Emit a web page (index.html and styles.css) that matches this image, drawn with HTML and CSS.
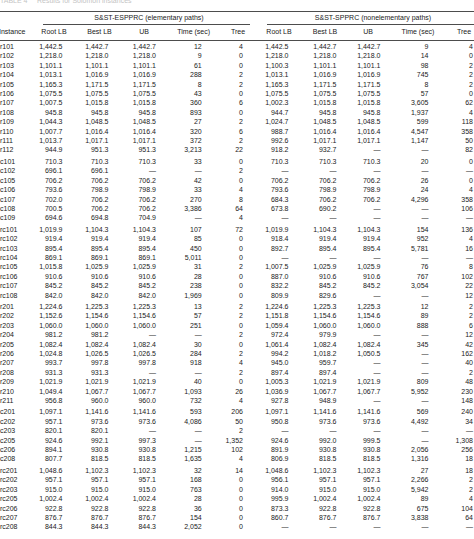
FILE: index.html
```html
<!DOCTYPE html>
<html lang="en">
<head>
<meta charset="utf-8">
<title>Table 4</title>
<link rel="stylesheet" href="styles.css">
</head>
<body>
<div class="sheet">
  <div class="caption"><span class="title"><span class="tno">TABLE 4</span>Results for Solomon instances</span></div>
  <table class="results">
    <colgroup>
      <col class="c-inst"><col class="c-rlb"><col class="c-blb"><col class="c-ub"><col class="c-time"><col class="c-tree">
      <col class="c-rlb2"><col class="c-blb2"><col class="c-ub2"><col class="c-time2"><col class="c-tree2">
    </colgroup>
    <thead>
      <tr class="grouphead">
        <th></th>
        <th colspan="5"><div class="grp grp-left">S&amp;ST-ESPPRC (elementary paths)</div></th>
        <th colspan="5"><div class="grp grp-right">S&amp;ST-SPPRC (nonelementary paths)</div></th>
      </tr>
      <tr class="colhead">
        <th class="inst">Instance</th>
        <th><span class="hc">Root LB</span></th>
        <th><span class="hc">Best LB</span></th>
        <th><span class="hc">UB</span></th>
        <th><span class="hc">Time (sec)</span></th>
        <th><span class="hc">Tree</span></th>
        <th><span class="hc">Root LB</span></th>
        <th><span class="hc">Best LB</span></th>
        <th><span class="hc">UB</span></th>
        <th><span class="hc">Time (sec)</span></th>
        <th><span class="hc">Tree</span></th>
      </tr>
    </thead>
    <tbody>
      <tr class="first"><td>r101</td><td>1,442.5</td><td>1,442.7</td><td>1,442.7</td><td>12</td><td>4</td><td>1,442.5</td><td>1,442.7</td><td>1,442.7</td><td>9</td><td>4</td></tr>
      <tr><td>r102</td><td>1,218.0</td><td>1,218.0</td><td>1,218.0</td><td>9</td><td>0</td><td>1,218.0</td><td>1,218.0</td><td>1,218.0</td><td>14</td><td>0</td></tr>
      <tr><td>r103</td><td>1,101.1</td><td>1,101.1</td><td>1,101.1</td><td>61</td><td>0</td><td>1,100.3</td><td>1,101.1</td><td>1,101.1</td><td>98</td><td>2</td></tr>
      <tr><td>r104</td><td>1,013.1</td><td>1,016.9</td><td>1,016.9</td><td>288</td><td>2</td><td>1,013.1</td><td>1,016.9</td><td>1,016.9</td><td>745</td><td>2</td></tr>
      <tr><td>r105</td><td>1,165.3</td><td>1,171.5</td><td>1,171.5</td><td>8</td><td>2</td><td>1,165.3</td><td>1,171.5</td><td>1,171.5</td><td>8</td><td>2</td></tr>
      <tr><td>r106</td><td>1,075.5</td><td>1,075.5</td><td>1,075.5</td><td>43</td><td>0</td><td>1,075.5</td><td>1,075.5</td><td>1,075.5</td><td>57</td><td>0</td></tr>
      <tr><td>r107</td><td>1,007.5</td><td>1,015.8</td><td>1,015.8</td><td>360</td><td>6</td><td>1,002.3</td><td>1,015.8</td><td>1,015.8</td><td>3,605</td><td>62</td></tr>
      <tr><td>r108</td><td>945.8</td><td>945.8</td><td>945.8</td><td>893</td><td>0</td><td>944.7</td><td>945.8</td><td>945.8</td><td>1,937</td><td>4</td></tr>
      <tr><td>r109</td><td>1,044.3</td><td>1,048.5</td><td>1,048.5</td><td>27</td><td>2</td><td>1,024.7</td><td>1,048.5</td><td>1,048.5</td><td>599</td><td>118</td></tr>
      <tr><td>r110</td><td>1,007.7</td><td>1,016.4</td><td>1,016.4</td><td>320</td><td>6</td><td>988.7</td><td>1,016.4</td><td>1,016.4</td><td>4,547</td><td>358</td></tr>
      <tr><td>r111</td><td>1,013.7</td><td>1,017.1</td><td>1,017.1</td><td>372</td><td>2</td><td>992.6</td><td>1,017.1</td><td>1,017.1</td><td>1,147</td><td>50</td></tr>
      <tr><td>r112</td><td>944.9</td><td>951.3</td><td>951.3</td><td>3,213</td><td>22</td><td>918.2</td><td>932.7</td><td>—</td><td>—</td><td>82</td></tr>
      <tr class="gs"><td>c101</td><td>710.3</td><td>710.3</td><td>710.3</td><td>33</td><td>0</td><td>710.3</td><td>710.3</td><td>710.3</td><td>20</td><td>0</td></tr>
      <tr><td>c102</td><td>696.1</td><td>696.1</td><td>—</td><td>—</td><td>2</td><td>—</td><td>—</td><td>—</td><td>—</td><td>—</td></tr>
      <tr><td>c105</td><td>706.2</td><td>706.2</td><td>706.2</td><td>42</td><td>0</td><td>706.2</td><td>706.2</td><td>706.2</td><td>26</td><td>0</td></tr>
      <tr><td>c106</td><td>793.6</td><td>798.9</td><td>798.9</td><td>33</td><td>4</td><td>793.6</td><td>798.9</td><td>798.9</td><td>24</td><td>4</td></tr>
      <tr><td>c107</td><td>702.0</td><td>706.2</td><td>706.2</td><td>270</td><td>8</td><td>684.3</td><td>706.2</td><td>706.2</td><td>4,296</td><td>358</td></tr>
      <tr><td>c108</td><td>700.5</td><td>706.2</td><td>706.2</td><td>3,386</td><td>64</td><td>673.8</td><td>690.2</td><td>—</td><td>—</td><td>106</td></tr>
      <tr><td>c109</td><td>694.6</td><td>694.8</td><td>704.9</td><td>—</td><td>4</td><td>—</td><td>—</td><td>—</td><td>—</td><td>—</td></tr>
      <tr class="gs"><td>rc101</td><td>1,019.9</td><td>1,104.3</td><td>1,104.3</td><td>107</td><td>72</td><td>1,019.9</td><td>1,104.3</td><td>1,104.3</td><td>154</td><td>136</td></tr>
      <tr><td>rc102</td><td>919.4</td><td>919.4</td><td>919.4</td><td>85</td><td>0</td><td>918.4</td><td>919.4</td><td>919.4</td><td>952</td><td>4</td></tr>
      <tr><td>rc103</td><td>895.4</td><td>895.4</td><td>895.4</td><td>450</td><td>0</td><td>892.7</td><td>895.4</td><td>895.4</td><td>5,781</td><td>16</td></tr>
      <tr><td>rc104</td><td>869.1</td><td>869.1</td><td>869.1</td><td>5,011</td><td>0</td><td>—</td><td>—</td><td>—</td><td>—</td><td>—</td></tr>
      <tr><td>rc105</td><td>1,015.8</td><td>1,025.9</td><td>1,025.9</td><td>31</td><td>2</td><td>1,007.5</td><td>1,025.9</td><td>1,025.9</td><td>76</td><td>8</td></tr>
      <tr><td>rc106</td><td>910.6</td><td>910.6</td><td>910.6</td><td>28</td><td>0</td><td>887.0</td><td>910.6</td><td>910.6</td><td>767</td><td>102</td></tr>
      <tr><td>rc107</td><td>845.2</td><td>845.2</td><td>845.2</td><td>238</td><td>0</td><td>832.2</td><td>845.2</td><td>845.2</td><td>3,054</td><td>22</td></tr>
      <tr><td>rc108</td><td>842.0</td><td>842.0</td><td>842.0</td><td>1,969</td><td>0</td><td>809.9</td><td>829.6</td><td>—</td><td>—</td><td>12</td></tr>
      <tr class="gs"><td>r201</td><td>1,224.6</td><td>1,225.3</td><td>1,225.3</td><td>13</td><td>2</td><td>1,224.6</td><td>1,225.3</td><td>1,225.3</td><td>12</td><td>2</td></tr>
      <tr><td>r202</td><td>1,152.6</td><td>1,154.6</td><td>1,154.6</td><td>57</td><td>2</td><td>1,151.8</td><td>1,154.6</td><td>1,154.6</td><td>89</td><td>2</td></tr>
      <tr><td>r203</td><td>1,060.0</td><td>1,060.0</td><td>1,060.0</td><td>251</td><td>0</td><td>1,059.4</td><td>1,060.0</td><td>1,060.0</td><td>888</td><td>6</td></tr>
      <tr><td>r204</td><td>981.2</td><td>981.2</td><td>—</td><td>—</td><td>2</td><td>972.4</td><td>979.9</td><td>—</td><td>—</td><td>12</td></tr>
      <tr><td>r205</td><td>1,082.4</td><td>1,082.4</td><td>1,082.4</td><td>30</td><td>0</td><td>1,061.4</td><td>1,082.4</td><td>1,082.4</td><td>345</td><td>42</td></tr>
      <tr><td>r206</td><td>1,024.8</td><td>1,026.5</td><td>1,026.5</td><td>284</td><td>2</td><td>994.2</td><td>1,018.2</td><td>1,050.5</td><td>—</td><td>162</td></tr>
      <tr><td>r207</td><td>993.7</td><td>997.8</td><td>997.8</td><td>918</td><td>4</td><td>945.0</td><td>959.7</td><td>—</td><td>—</td><td>40</td></tr>
      <tr><td>r208</td><td>931.3</td><td>931.3</td><td>—</td><td>—</td><td>2</td><td>897.4</td><td>897.4</td><td>—</td><td>—</td><td>2</td></tr>
      <tr><td>r209</td><td>1,021.9</td><td>1,021.9</td><td>1,021.9</td><td>40</td><td>0</td><td>1,005.3</td><td>1,021.9</td><td>1,021.9</td><td>809</td><td>48</td></tr>
      <tr><td>r210</td><td>1,049.4</td><td>1,067.7</td><td>1,067.7</td><td>1,093</td><td>26</td><td>1,036.9</td><td>1,067.7</td><td>1,067.7</td><td>5,952</td><td>230</td></tr>
      <tr><td>r211</td><td>956.8</td><td>960.0</td><td>960.0</td><td>732</td><td>4</td><td>927.8</td><td>948.9</td><td>—</td><td>—</td><td>148</td></tr>
      <tr class="gs"><td>c201</td><td>1,097.1</td><td>1,141.6</td><td>1,141.6</td><td>593</td><td>206</td><td>1,097.1</td><td>1,141.6</td><td>1,141.6</td><td>569</td><td>240</td></tr>
      <tr><td>c202</td><td>957.1</td><td>973.6</td><td>973.6</td><td>4,086</td><td>50</td><td>950.8</td><td>973.6</td><td>973.6</td><td>4,492</td><td>34</td></tr>
      <tr><td>c203</td><td>820.1</td><td>820.1</td><td>—</td><td>—</td><td>2</td><td>—</td><td>—</td><td>—</td><td>—</td><td>—</td></tr>
      <tr><td>c205</td><td>924.6</td><td>992.1</td><td>997.3</td><td>—</td><td>1,352</td><td>924.6</td><td>992.0</td><td>999.5</td><td>—</td><td>1,308</td></tr>
      <tr><td>c206</td><td>894.1</td><td>930.8</td><td>930.8</td><td>1,215</td><td>102</td><td>891.9</td><td>930.8</td><td>930.8</td><td>2,056</td><td>256</td></tr>
      <tr><td>c208</td><td>807.7</td><td>818.5</td><td>818.5</td><td>1,635</td><td>4</td><td>806.9</td><td>818.5</td><td>818.5</td><td>1,316</td><td>18</td></tr>
      <tr class="gs"><td>rc201</td><td>1,048.6</td><td>1,102.3</td><td>1,102.3</td><td>32</td><td>14</td><td>1,048.6</td><td>1,102.3</td><td>1,102.3</td><td>27</td><td>18</td></tr>
      <tr><td>rc202</td><td>957.1</td><td>957.1</td><td>957.1</td><td>168</td><td>0</td><td>956.1</td><td>957.1</td><td>957.1</td><td>2,266</td><td>2</td></tr>
      <tr><td>rc203</td><td>915.0</td><td>915.0</td><td>915.0</td><td>763</td><td>0</td><td>914.0</td><td>915.0</td><td>915.0</td><td>5,942</td><td>2</td></tr>
      <tr><td>rc205</td><td>1,002.4</td><td>1,002.4</td><td>1,002.4</td><td>28</td><td>0</td><td>995.9</td><td>1,002.4</td><td>1,002.4</td><td>89</td><td>4</td></tr>
      <tr><td>rc206</td><td>922.8</td><td>922.8</td><td>922.8</td><td>36</td><td>0</td><td>873.3</td><td>922.8</td><td>922.8</td><td>675</td><td>104</td></tr>
      <tr><td>rc207</td><td>876.7</td><td>876.7</td><td>876.7</td><td>154</td><td>0</td><td>860.7</td><td>876.7</td><td>876.7</td><td>3,838</td><td>64</td></tr>
      <tr><td>rc208</td><td>844.3</td><td>844.3</td><td>844.3</td><td>2,052</td><td>0</td><td>—</td><td>—</td><td>—</td><td>—</td><td>—</td></tr>
    </tbody>
  </table>
</div>
</body>
</html>
```

FILE: styles.css
```css
* { box-sizing: border-box; }

html, body {
  margin: 0;
  padding: 0;
  background: #ffffff;
}

body {
  font-family: "Liberation Sans Narrow", "Liberation Sans", Arial, sans-serif;
  font-size: 7px;
  color: #222222;
}

.sheet {
  width: 474px;
  overflow: hidden;
}

.caption {
  height: 12px;
  border-bottom: 1px solid #4d4d4d;
  overflow: hidden;
}

.title {
  display: block;
  margin-top: -3px;
  line-height: 8px;
  font-size: 7px;
  color: #c4c4c4;
  white-space: nowrap;
}

.tno {
  display: inline-block;
  width: 37px;
}

.results {
  width: 474px;
  border-collapse: collapse;
  border-spacing: 0;
  table-layout: fixed;
}

.c-inst  { width: 30px; }
.c-rlb   { width: 32.5px; }
.c-blb   { width: 46px; }
.c-ub    { width: 47.5px; }
.c-time  { width: 45.7px; }
.c-tree  { width: 41.3px; }
.c-rlb2  { width: 45.5px; }
.c-blb2  { width: 48px; }
.c-ub2   { width: 44px; }
.c-time2 { width: 48px; }
.c-tree2 { width: 45.5px; }

.results th,
.results td {
  padding: 0;
  font-weight: normal;
  white-space: nowrap;
  text-align: right;
}

.grouphead th {
  vertical-align: top;
}

.grp {
  line-height: 12px;
  border-bottom: 1px solid #4d4d4d;
  text-align: center;
  padding-left: 5px;
}

.grp-left {
  margin-left: 13px;
  margin-right: -7px;
}

.grp-right {
  margin-left: 24px;
  margin-right: 0;
}

.colhead th {
  line-height: 13px;
  padding-bottom: 2px;
  border-bottom: 1px solid #4d4d4d;
}

.colhead th.inst {
  text-align: left;
  text-indent: -1px;
}

.hc {
  display: flex;
  justify-content: center;
  width: 0;
  margin-left: auto;
}

.colhead th:nth-child(2)  .hc { margin-right: 8.5px; }
.colhead th:nth-child(3)  .hc { margin-right: 9px; }
.colhead th:nth-child(4)  .hc { margin-right: 12px; }
.colhead th:nth-child(5)  .hc { margin-right: 8px; }
.colhead th:nth-child(6)  .hc { margin-right: 5px; }
.colhead th:nth-child(7)  .hc { margin-right: 9.5px; }
.colhead th:nth-child(8)  .hc { margin-right: 11.5px; }
.colhead th:nth-child(9)  .hc { margin-right: 12.5px; }
.colhead th:nth-child(10) .hc { margin-right: 10.5px; }
.colhead th:nth-child(11) .hc { margin-right: 10px; }

.results tbody td {
  line-height: 9.4px;
}

.results tbody td:first-child {
  text-align: left;
}

.results tbody td:last-child {
  padding-right: 1px;
}

.results tbody tr.first td {
  padding-top: 1px;
}

.results tbody tr.gs td {
  padding-top: 2px;
}
```
